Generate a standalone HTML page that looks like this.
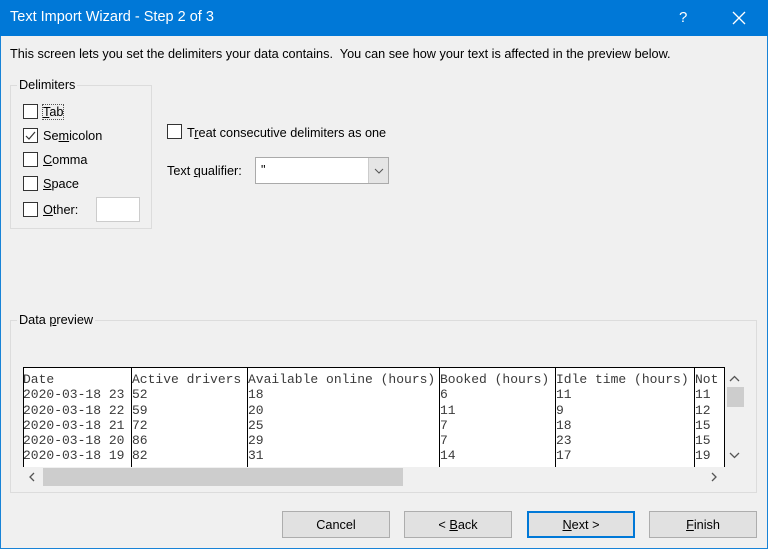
<!DOCTYPE html><html><head><style>
*{margin:0;padding:0;box-sizing:border-box}
body{width:768px;height:549px;background:#f0f0f0;font-family:"Liberation Sans",sans-serif;font-size:12.7px;color:#000;position:relative;overflow:hidden}
.win{position:absolute;left:0;top:0;width:768px;height:549px;border:1px solid #1883d7}
.title{position:absolute;left:0;top:0;width:768px;height:36px;background:#0078d7;color:#fff;font-size:14.5px}
.a{position:absolute;white-space:nowrap}
.grp{position:absolute;border:1px solid #dcdcdc}
.gl{position:absolute;background:#f0f0f0;padding:0 2px;top:-8px;left:6px}
.cb{position:absolute;width:15px;height:15px;border:1px solid #333;background:#fff}
u{text-decoration:underline}
.btn{position:absolute;top:511px;height:27px;border:1px solid #adadad;background:#e1e1e1;text-align:center;line-height:25px;font-size:12.7px}
.tbl{position:absolute;left:23px;top:367px;width:702px;height:100px;background:#fff;border-top:1px solid #000;border-left:1px solid #000;overflow:hidden;font-family:"Liberation Mono",monospace;font-size:13px;color:#3a3a3a}
.col{position:absolute;top:0;height:100px;border-left:1px solid #000;line-height:15.3px;padding-top:4px}
</style></head><body>
<div class="win"></div>
<div class="title"><span class="a" style="left:10px;top:9px">Text Import Wizard - Step 2 of 3</span><span class="a" style="left:679px;top:9px;font-size:15px">?</span>
<svg class="a" style="left:732px;top:11px" width="14" height="14"><path d="M1 1L13 13M13 1L1 13" stroke="#fff" stroke-width="1.3"/></svg></div>
<div class="a" style="left:10px;top:47px">This screen lets you set the delimiters your data contains.&nbsp; You can see how your text is affected in the preview below.</div>
<div class="grp" style="left:10px;top:85px;width:142px;height:144px"><span class="gl">Delimiters</span></div>
<div class="cb" style="left:23px;top:104px"></div><span class="a" style="left:43px;top:105px;outline:1px dotted #555"><u>T</u>ab</span>
<div class="cb" style="left:23px;top:128px"><svg width="13" height="13" style="position:absolute;left:0;top:0"><path d="M2 7L5 10L11 3" stroke="#333" fill="none" stroke-width="1.2"/></svg></div><span class="a" style="left:43px;top:129px">Se<u>m</u>icolon</span>
<div class="cb" style="left:23px;top:152px"></div><span class="a" style="left:43px;top:153px"><u>C</u>omma</span>
<div class="cb" style="left:23px;top:176px"></div><span class="a" style="left:43px;top:177px"><u>S</u>pace</span>
<div class="cb" style="left:23px;top:202px"></div><span class="a" style="left:43px;top:203px"><u>O</u>ther:</span>
<div class="a" style="left:96px;top:197px;width:44px;height:25px;background:#fff;border:1px solid #ccc"></div>
<div class="cb" style="left:167px;top:124px"></div><span class="a" style="left:187px;top:126px">T<u>r</u>eat consecutive delimiters as one</span>
<span class="a" style="left:167px;top:164px">Text <u>q</u>ualifier:</span>
<div class="a" style="left:255px;top:157px;width:134px;height:27px;background:#fff;border:1px solid #aaa"><span class="a" style="left:5px;top:5px">"</span><div class="a" style="right:0;top:0;width:20px;height:25px;background:#e5e5e5;border-left:1px solid #ccc"><svg width="20" height="25"><path d="M6 11L10 15L14 11" stroke="#555" fill="none"/></svg></div></div>
<div class="grp" style="left:10px;top:320px;width:747px;height:173px"><span class="gl">Data <u>p</u>review</span></div>
<div class="tbl">
<div class="col" style="left:-1px;border-left:none;padding-left:0">Date<br>2020-03-18 23<br>2020-03-18 22<br>2020-03-18 21<br>2020-03-18 20<br>2020-03-18 19</div>
<div class="col" style="left:107px">Active drivers<br>52<br>59<br>72<br>86<br>82</div>
<div class="col" style="left:223px">Available online (hours)<br>18<br>20<br>25<br>29<br>31</div>
<div class="col" style="left:415px">Booked (hours)<br>6<br>11<br>7<br>7<br>14</div>
<div class="col" style="left:531px">Idle time (hours)<br>11<br>9<br>18<br>23<br>17</div>
<div class="col" style="left:670px">Not<br>11<br>12<br>15<br>15<br>19</div>
<div class="col" style="left:700px;border-left:1px solid #000"></div>
</div>
<div class="a" style="left:725px;top:367px;width:20px;height:100px;background:#f0f0f0">
<svg class="a" style="left:0;top:0" width="20" height="100"><path d="M5 14L9.5 9.5L14 14" stroke="#555" fill="none" stroke-width="1.3"/><path d="M5 86L9.5 90.5L14 86" stroke="#555" fill="none" stroke-width="1.3"/></svg>
<div class="a" style="left:2px;top:20px;width:17px;height:20px;background:#cdcdcd"></div></div>
<div class="a" style="left:23px;top:467px;width:702px;height:20px;background:#f0f0f0">
<svg class="a" style="left:0;top:0" width="702" height="20"><path d="M11 6L7 10L11 14" stroke="#555" fill="none" stroke-width="1.3"/><path d="M689 6L693 10L689 14" stroke="#555" fill="none" stroke-width="1.3"/></svg>
<div class="a" style="left:20px;top:1px;width:360px;height:18px;background:#cdcdcd"></div></div>
<div class="btn" style="left:282px;width:108px;line-height:27px">Cancel</div>
<div class="btn" style="left:404px;width:108px;line-height:27px">&lt; <u>B</u>ack</div>
<div class="btn" style="left:527px;width:108px;border:2px solid #0078d7;line-height:25px"><u>N</u>ext &gt;</div>
<div class="btn" style="left:649px;width:108px;line-height:27px"><u>F</u>inish</div>
</body></html>
